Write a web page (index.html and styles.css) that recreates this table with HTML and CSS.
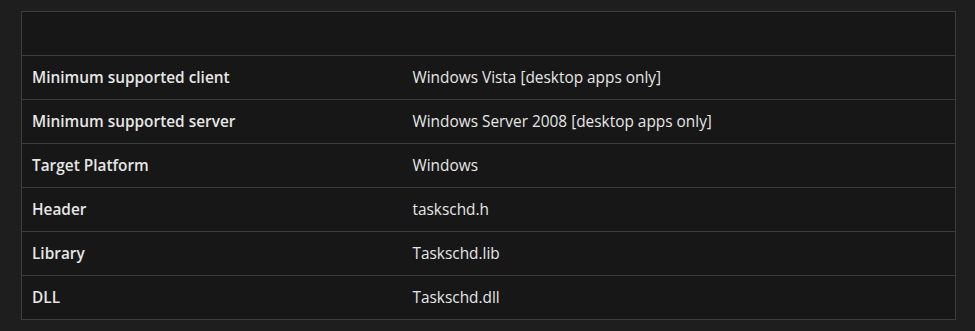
FILE: index.html
```html
<!DOCTYPE html>
<html>
<head>
    <meta charset="UTF-8">
    <meta name="viewport" content="width=device-width, initial-scale=1.0">
    <title>Requirements</title>
    <link rel="stylesheet" href="styles.css">
</head>
<body>
    <div class="container">
        <table class="req-table">
            <thead>
                <tr>
                    <th></th>
                    <th></th>
                </tr>
            </thead>
            <tbody>
                <tr>
                    <td class="key">Minimum supported client</td>
                    <td>Windows Vista [desktop apps only]</td>
                </tr>
                <tr>
                    <td class="key">Minimum supported server</td>
                    <td>Windows Server 2008 [desktop apps only]</td>
                </tr>
                <tr>
                    <td class="key">Target Platform</td>
                    <td>Windows</td>
                </tr>
                <tr>
                    <td class="key">Header</td>
                    <td>taskschd.h</td>
                </tr>
                <tr>
                    <td class="key">Library</td>
                    <td>Taskschd.lib</td>
                </tr>
                <tr>
                    <td class="key">DLL</td>
                    <td>Taskschd.dll</td>
                </tr>
            </tbody>
        </table>
    </div>
</body>
</html>
```

FILE: styles.css
```css
/* Reset and Base Styles */
* {
    margin: 0;
    padding: 0;
    box-sizing: border-box;
}

body {
    background-color: #1e1e1e;
    font-family: 'Open Sans', 'Noto Sans', sans-serif;
    color: #e6e6e6;
}

.container {
    padding: 11px 19px 0 21px;
}

.req-table {
    width: 935px;
    border-collapse: collapse;
    background-color: #171717;
    border: 1px solid #3d3d3d;
    font-size: 15.4px;
}

.req-table th,
.req-table td {
    height: 44px;
    padding: 0 10px;
    text-align: left;
    vertical-align: middle;
    border-bottom: 1px solid #3d3d3d;
}

.req-table td:first-child {
    width: 381px;
}

.key {
    font-weight: 600;
}
```
